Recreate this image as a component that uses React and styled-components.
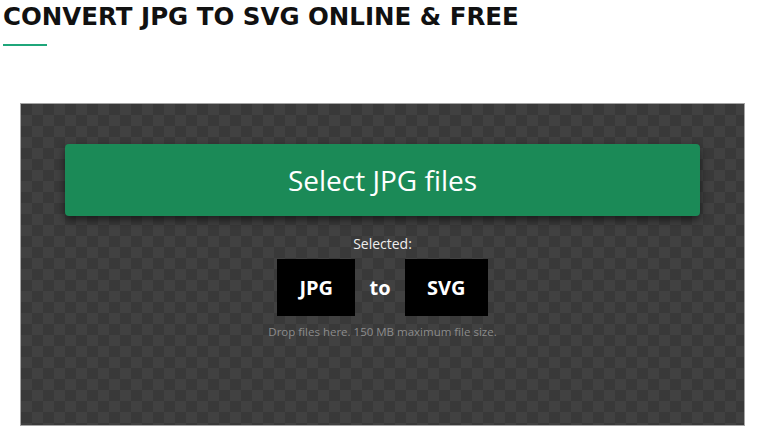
import React from "react";
import styled, { createGlobalStyle } from "styled-components";

const Global = createGlobalStyle`
  html, body { margin: 0; padding: 0; background: #ffffff; }
  body { font-family: "Open Sans", "Liberation Sans", sans-serif; }
`;

const Page = styled.div`
  width: 780px;
  height: 439px;
  overflow: hidden;
  padding-left: 3px;
  box-sizing: border-box;
`;

const Title = styled.h1`
  margin: 0;
  padding-top: 2px;
  font-family: "DejaVu Sans", "Liberation Sans", sans-serif;
  font-weight: 700;
  font-size: 24.5px;
  line-height: 30px;
  color: #111111;
`;

const Underline = styled.div`
  width: 44px;
  height: 2px;
  margin-top: 12px;
  background: #1fa67a;
`;

const Panel = styled.div`
  margin-top: 57px;
  margin-left: 17px;
  width: 725px;
  height: 323px;
  box-sizing: border-box;
  border: 1px solid #a5a5a5;
  background-color: #393939;
  background-image:
    linear-gradient(45deg, #414141 25%, transparent 25%, transparent 75%, #414141 75%),
    linear-gradient(45deg, #414141 25%, transparent 25%, transparent 75%, #414141 75%);
  background-size: 22px 22px;
  background-position: 0 0, 11px 11px;
  display: flex;
  flex-direction: column;
  align-items: center;
  padding-top: 40px;
`;

const SelectButton = styled.button`
  width: 635px;
  height: 72px;
  border: none;
  border-radius: 4px;
  background: #1b8a57;
  color: #ffffff;
  font-family: "Open Sans", "Liberation Sans", sans-serif;
  font-size: 28px;
  font-weight: 400;
  box-shadow: 0 4px 8px rgba(0, 0, 0, 0.55);
  cursor: pointer;
  padding: 0;
`;

const SelectedLabel = styled.div`
  margin-top: 18px;
  font-size: 14px;
  line-height: 19px;
  color: #eeeeee;
`;

const FormatRow = styled.div`
  margin-top: 6px;
  display: flex;
  align-items: center;
`;

const FormatBox = styled.div`
  height: 57px;
  padding: 0 22px;
  background: #000000;
  color: #ffffff;
  display: flex;
  align-items: center;
  justify-content: center;
  font-size: 20px;
  font-weight: 700;
`;

const ToText = styled.div`
  width: 50px;
  text-align: center;
  color: #ffffff;
  font-size: 20px;
  font-weight: 700;
`;

const Hint = styled.div`
  margin-top: 8px;
  font-size: 11.5px;
  line-height: 16px;
  color: #8c8c8c;
`;

export default function App() {
  return (
    <>
      <Global />
      <Page>
        <Title>CONVERT JPG TO SVG ONLINE &amp; FREE</Title>
        <Underline />
        <Panel>
          <SelectButton>Select JPG files</SelectButton>
          <SelectedLabel>Selected:</SelectedLabel>
          <FormatRow>
            <FormatBox>JPG</FormatBox>
            <ToText>to</ToText>
            <FormatBox>SVG</FormatBox>
          </FormatRow>
          <Hint>Drop files here. 150 MB maximum file size.</Hint>
        </Panel>
      </Page>
    </>
  );
}
